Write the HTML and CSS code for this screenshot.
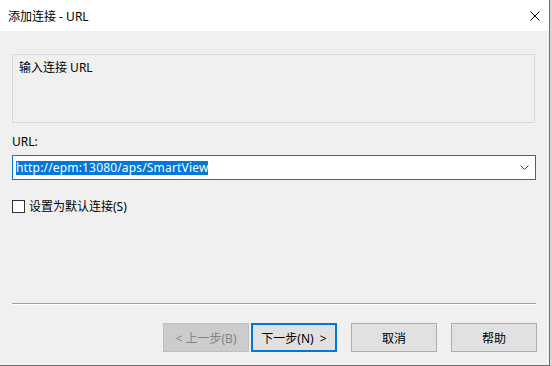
FILE: index.html
```html
<!DOCTYPE html>
<html lang="zh-CN">
<head>
    <meta charset="UTF-8">
    <title>添加连接 - URL</title>
    <link rel="stylesheet" href="styles.css">
</head>
<body>
<div class="window">
    <!-- 标题栏 -->
    <div class="titlebar">
        <span class="title">添加连接 - URL</span>
        <svg class="close" width="10" height="10" viewBox="0 0 10 10">
            <path d="M0.5 0.5 L9.5 9.5 M9.5 0.5 L0.5 9.5" stroke="#000" stroke-width="1" fill="none"/>
        </svg>
    </div>
    <div class="content">
        <div class="info">输入连接 URL</div>
        <div class="field-label">URL:</div>
        <div class="combo">
            <span class="sel">http://epm:13080/aps/SmartView</span>
            <svg class="arrow" width="9" height="5" viewBox="0 0 9 5">
                <path d="M0.5 0.5 L4.5 4.5 L8.5 0.5" stroke="#444" stroke-width="1" fill="none"/>
            </svg>
        </div>
        <div class="check">
            <span class="box"></span>
            <span>设置为默认连接(S)</span>
        </div>
        <div class="sep"></div>
        <div class="buttons">
            <div class="btn disabled">&lt; 上一步(B)</div>
            <div class="btn focus">下一步(N)&nbsp;&nbsp;&gt;</div>
            <div class="btn gap">取消</div>
            <div class="btn gap">帮助</div>
        </div>
    </div>
</div>
</body>
</html>
```

FILE: styles.css
```css
*{
    margin: 0;
    padding: 0;
    box-sizing: border-box;
}
html, body{
    background: #d6d6d6;
}
body{
    width: 552px;
    height: 366px;
    font-family: "Noto Sans", "Noto Sans CJK SC", sans-serif;
    font-size: 12px;
    color: #000;
}
.window{
    width: 550px;
    height: 366px;
    background: #f0f0f0;
    border-right: 1px solid #6f6f6f;
    border-bottom: 1px solid #6f6f6f;
    display: flex;
    flex-direction: column;
}
.titlebar{
    height: 31px;
    background: #fff;
    display: flex;
    align-items: center;
    padding-left: 8px;
    padding-right: 9px;
}
.title{
    flex: 1;
}
.content{
    flex: 1;
    display: flex;
    flex-direction: column;
    padding: 0 13px 13px 12px;
}
.info{
    margin-top: 23px;
    height: 69px;
    margin-right: 1px;
    border: 1px solid #dadada;
    padding: 5px 6px;
    line-height: 16px;
}
.field-label{
    margin-top: 11px;
    line-height: 16px;
}
.combo{
    margin-top: 5px;
    height: 25px;
    background: #fff;
    border: 1px solid #0078d7;
    display: flex;
    align-items: center;
    padding: 0 6px 0 3px;
}
.sel{
    background: #0078d7;
    color: #fff;
    line-height: 14px;
    height: 14px;
    letter-spacing: 0.17px;
    flex: none;
}
.arrow{
    margin-left: auto;
}
.check{
    margin-top: 19px;
    height: 15px;
    display: flex;
    align-items: center;
    line-height: 15px;
}
.check .box{
    width: 13px;
    height: 13px;
    border: 1px solid #333;
    background: #fff;
    margin-right: 4px;
}
.sep{
    margin-top: auto;
    height: 2px;
    border-top: 1px solid #a0a0a0;
    border-bottom: 1px solid #fff;
}
.buttons{
    margin-top: 18px;
    display: flex;
    justify-content: flex-end;
    margin-right: -1px;
}
.btn{
    width: 86px;
    height: 29px;
    background: #e1e1e1;
    border: 1px solid #adadad;
    display: flex;
    align-items: center;
    justify-content: center;
}
.btn.disabled{
    background: #cccccc;
    border-color: #bfbfbf;
    color: #838383;
    margin-right: 2px;
}
.btn.focus{
    border: 2px solid #0078d7;
}
.btn.gap{
    margin-left: 14px;
}
```
